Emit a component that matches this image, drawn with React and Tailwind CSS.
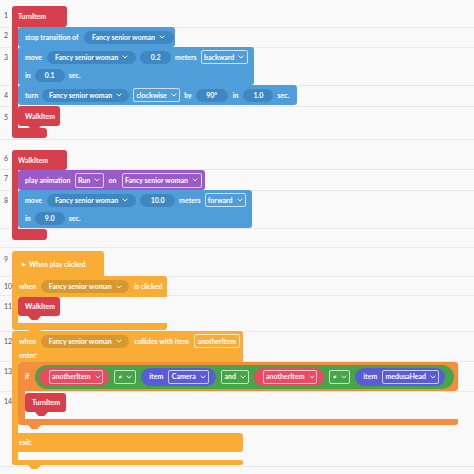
import React from 'react';

const RED = 'bg-[#d6404c]';
const BLUE = 'bg-[#4f9ed9]';
const ORANGE = 'bg-[#f9ad36]';
const IFORANGE = 'bg-[#f58e3c]';

const Chev = () => (
  <svg width="6" height="4" viewBox="0 0 6 4" className="shrink-0">
    <path d="M1 1 L3 3 L5 1" fill="none" stroke="white" strokeWidth="1" strokeLinecap="round" strokeLinejoin="round" />
  </svg>
);

const T = ({ children, className = '' }) => (
  <span className={`text-[7px] font-bold leading-none text-white whitespace-nowrap ${className}`}>{children}</span>
);

const Pill = ({ label, bg, w, chev = true }) => (
  <div className={`h-[13px] rounded-full flex items-center justify-center gap-[4px] shrink-0 ${bg} ${w}`}>
    <T>{label}</T>
    {chev && <Chev />}
  </div>
);

const Box = ({ label, w, h = 'h-[14px]', chev = true }) => (
  <div className={`rounded-[2px] border border-white/70 flex items-center justify-center gap-[4px] shrink-0 ${h} ${w}`}>
    <T>{label}</T>
    {chev && <Chev />}
  </div>
);

// small puzzle tab hanging under a block
const Tab = ({ bg, left = 'left-[10px]' }) => (
  <div className={`absolute ${left} -bottom-[4px] w-[13px] h-[4px] [clip-path:polygon(0_0,100%_0,72%_100%,28%_100%)] ${bg}`} />
);

const Call = ({ label, w, h = 'h-[20px]', className = '' }) => (
  <div className={`relative ${RED} ${w} ${h} rounded-[3px] flex items-center pl-[7px] shrink-0 ${className}`}>
    <T>{label}</T>
    <Tab bg={RED} />
  </div>
);

const Row = ({ n, className }) => (
  <div className={`border-b border-[#e9e9e9] pl-[4px] text-[7px] leading-[8px] text-[#555] ${className}`}>{n}</div>
);

const Gutter = () => (
  <div className="col-start-1 row-start-1 flex flex-col">
    <div className="h-[5px]" />
    <Row n="1" className="h-[23px] pt-[6px]" />
    <Row n="2" className="h-[20px] pt-[3px]" />
    <Row n="3" className="h-[38px] pt-[5px]" />
    <Row n="4" className="h-[21px] pt-[5px]" />
    <Row n="5" className="h-[33px] pt-[6px]" />
    <Row n="6" className="h-[30px] pt-[14px]" />
    <Row n="7" className="h-[21px] pt-[4px]" />
    <Row n="8" className="h-[38px] pt-[5px]" />
    <Row n="" className="h-[19px]" />
    <Row n="9" className="h-[29px] pt-[7px]" />
    <Row n="10" className="h-[19px] pt-[5px]" />
    <Row n="11" className="h-[36px] pt-[6px]" />
    <Row n="12" className="h-[30px] pt-[5px]" />
    <Row n="13" className="h-[30px] pt-[5px]" />
    <Row n="14" className="h-[75px] pt-[5px]" />
  </div>
);

const Condition = () => (
  <div className="h-[24px] w-[419px] rounded-full bg-[#46a449] flex items-center pl-[4px] gap-[5px]">
    <div className="h-[18px] w-[70px] rounded-full bg-[#ec4963] flex items-center pl-[10px]">
      <Box label="anotherItem" w="w-[54px]" />
    </div>
    <Box label="≠" w="w-[22px]" />
    <div className="h-[18px] w-[75px] rounded-full bg-[#5a5bd6] flex items-center pl-[8px] gap-[5px]">
      <T>item</T>
      <Box label="Camera" w="w-[41px]" />
    </div>
    <Box label="and" w="w-[28px]" />
    <div className="h-[18px] w-[70px] rounded-full bg-[#ec4963] flex items-center pl-[9px]">
      <Box label="anotherItem" w="w-[54px]" />
    </div>
    <Box label="≠" w="w-[21px]" />
    <div className="h-[18px] w-[90px] rounded-full bg-[#5a5bd6] flex items-center pl-[8px] gap-[5px]">
      <T>item</T>
      <Box label="medusaHead" w="w-[57px]" />
    </div>
  </div>
);

const Blocks = () => (
  <div className="col-start-1 row-start-1 flex flex-col items-start pt-[6px] pl-[12px]">
    {/* TurnItem definition */}
    <div className={`${RED} w-[55px] h-[21px] rounded-t-[3px] rounded-br-[3px] flex items-center pl-[6px]`}>
      <T>TurnItem</T>
    </div>
    <div className="flex">
      <div className={`${RED} w-[6px]`} />
      <div className="flex flex-col items-start">
        <div className={`${BLUE} w-[157px] h-[20px] rounded-[3px] flex items-center pl-[7px] gap-[5px]`}>
          <T>stop transition of</T>
          <Pill label="Fancy senior woman" bg="bg-[#3f87c1]" w="w-[90px]" />
        </div>
        <div className={`${BLUE} w-[236px] h-[38px] rounded-[3px] flex flex-col justify-center gap-[5px] pl-[7px]`}>
          <div className="flex items-center gap-[4px]">
            <T className="mr-[1px]">move</T>
            <Pill label="Fancy senior woman" bg="bg-[#3f87c1]" w="w-[89px]" />
            <Pill label="0.2" bg="bg-[#3f87c1]" w="w-[31px]" chev={false} />
            <T>meters</T>
            <Box label="backward" w="w-[47px]" />
          </div>
          <div className="flex items-center gap-[4px]">
            <T>in</T>
            <Pill label="0.1" bg="bg-[#3f87c1]" w="w-[30px]" chev={false} />
            <T>sec.</T>
          </div>
        </div>
        <div className={`${BLUE} w-[279px] h-[20px] rounded-[3px] flex items-center pl-[7px] gap-[4px]`}>
          <T>turn</T>
          <Pill label="Fancy senior woman" bg="bg-[#3f87c1]" w="w-[87px]" />
          <Box label="clockwise" w="w-[47px]" />
          <T>by</T>
          <Pill label="90°" bg="bg-[#3f87c1]" w="w-[32px]" chev={false} />
          <T className="mx-[1px]">in</T>
          <Pill label="1.0" bg="bg-[#3f87c1]" w="w-[30px]" chev={false} />
          <T>sec.</T>
        </div>
        <Call label="WalkItem" w="w-[42px]" className="mt-[1px]" />
        <div className="h-[2px]" />
      </div>
    </div>
    <div className={`relative ${RED} w-[35px] h-[10px] rounded-b-[3px] rounded-tr-[3px]`} />

    {/* WalkItem definition */}
    <div className={`mt-[12px] ${RED} w-[55px] h-[20px] rounded-t-[3px] rounded-br-[3px] flex items-center pl-[6px]`}>
      <T>WalkItem</T>
    </div>
    <div className="flex">
      <div className={`${RED} w-[6px]`} />
      <div className="flex flex-col items-start">
        <div className="bg-[#9a5bc9] w-[187px] h-[20px] rounded-[3px] flex items-center pl-[7px] gap-[4px]">
          <T>play animation</T>
          <Box label="Run" w="w-[29px]" h="h-[15px]" />
          <T className="mx-[1px]">on</T>
          <Box label="Fancy senior woman" w="w-[80px]" h="h-[15px]" />
        </div>
        <div className={`${BLUE} w-[234px] h-[38px] rounded-[3px] flex flex-col justify-center gap-[5px] pl-[7px]`}>
          <div className="flex items-center gap-[4px]">
            <T className="mr-[1px]">move</T>
            <Pill label="Fancy senior woman" bg="bg-[#3f87c1]" w="w-[89px]" />
            <Pill label="10.0" bg="bg-[#3f87c1]" w="w-[35px]" chev={false} />
            <T>meters</T>
            <Box label="forward" w="w-[41px]" />
          </div>
          <div className="flex items-center gap-[4px]">
            <T>in</T>
            <Pill label="9.0" bg="bg-[#3f87c1]" w="w-[30px]" chev={false} />
            <T>sec.</T>
          </div>
        </div>
        <div className="h-[1px]" />
      </div>
    </div>
    <div className={`${RED} w-[35px] h-[11px] rounded-b-[3px] rounded-tr-[3px]`} />

    {/* When play clicked */}
    <div className={`mt-[11px] ${ORANGE} w-[92px] h-[25px] rounded-t-[3px] flex items-center pl-[10px] gap-[3px] pt-[2px]`}>
      <span className="text-[5px] leading-none text-white">▶</span>
      <T>When play clicked</T>
    </div>
    <div className={`${ORANGE} w-[155px] h-[21px] rounded-tr-[3px] flex items-center pl-[7px] gap-[5px]`}>
      <T>when</T>
      <Pill label="Fancy senior woman" bg="bg-[#d7982f]" w="w-[88px]" />
      <T>is clicked</T>
    </div>
    <div className="flex">
      <div className={`${ORANGE} w-[6px]`} />
      <div className="flex flex-col items-start">
        <Call label="WalkItem" w="w-[42px]" h="h-[19px]" />
        <div className="h-[7px]" />
      </div>
    </div>
    <div className={`relative ${ORANGE} w-[155px] h-[7px] rounded-b-[3px]`}>
      <Tab bg={ORANGE} left="left-[16px]" />
    </div>

    {/* collides */}
    <div className={`mt-[1px] ${ORANGE} w-[231px] h-[31px] rounded-t-[3px] flex flex-col pl-[7px] pt-[3px] gap-[4px]`}>
      <div className="flex items-center gap-[5px]">
        <T>when</T>
        <Pill label="Fancy senior woman" bg="bg-[#d7982f]" w="w-[88px]" />
        <T>collides with item</T>
        <Box label="anotherItem" w="w-[46px]" chev={false} />
      </div>
      <T>enter:</T>
    </div>
    <div className="flex">
      <div className={`${ORANGE} w-[6px]`} />
      <div className="flex flex-col items-start">
        <div className={`${IFORANGE} w-[440px] h-[29px] rounded-t-[3px] rounded-br-[3px] flex items-center pl-[7px] gap-[6px]`}>
          <T>if</T>
          <Condition />
        </div>
        <div className="flex">
          <div className={`${IFORANGE} w-[7px]`} />
          <div className="flex flex-col items-start">
            <Call label="TurnItem" w="w-[41px]" h="h-[19px]" className="mt-[2px]" />
            <div className="h-[7px]" />
          </div>
        </div>
        <div className={`relative ${IFORANGE} w-[440px] h-[6px] rounded-b-[3px]`}>
          <Tab bg={IFORANGE} />
        </div>
        <div className="h-[8px]" />
      </div>
    </div>
    <div className={`${ORANGE} w-[231px] h-[19px] rounded-r-[3px] flex items-center pl-[7px]`}>
      <T>exit:</T>
    </div>
    <div className="flex">
      <div className={`${ORANGE} w-[6px]`} />
      <div className="h-[8px]" />
    </div>
    <div className={`relative ${ORANGE} w-[231px] h-[5px] rounded-b-[3px] rounded-tr-[3px]`}>
      <Tab bg={ORANGE} left="left-[16px]" />
    </div>
  </div>
);

export default function App() {
  return (
    <div className="grid w-[474px] h-[474px] bg-[#f9f9f9] overflow-hidden font-['Lato',sans-serif]">
      <Gutter />
      <Blocks />
    </div>
  );
}
